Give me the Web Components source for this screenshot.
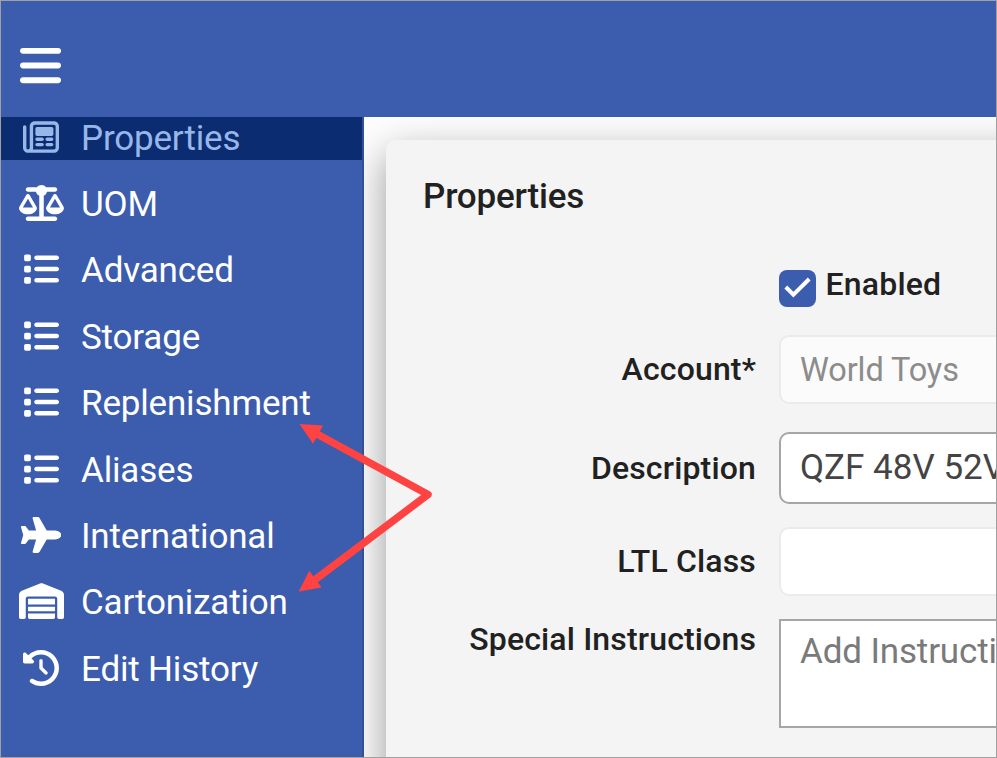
<!DOCTYPE html>
<html lang="en">
<head>
<meta charset="utf-8">
<title>Properties</title>
<style>
  body {
    margin: 0;
    overflow: hidden;
    font-family: Roboto, "Liberation Sans", sans-serif;
  }
</style>
</head>
<body>
<item-app>
  <app-header slot="header"></app-header>
  <side-nav slot="nav">
    <nav-item icon="newspaper" active>Properties</nav-item>
    <nav-item icon="scale">UOM</nav-item>
    <nav-item icon="list">Advanced</nav-item>
    <nav-item icon="list">Storage</nav-item>
    <nav-item icon="list">Replenishment</nav-item>
    <nav-item icon="list">Aliases</nav-item>
    <nav-item icon="plane">International</nav-item>
    <nav-item icon="warehouse">Cartonization</nav-item>
    <nav-item icon="history">Edit History</nav-item>
  </side-nav>
  <form-card heading="Properties">
    <check-field>Enabled</check-field>
    <form-field label="Account*" kind="disabled">World Toys</form-field>
    <form-field label="Description" kind="text">QZF 48V 52V</form-field>
    <form-field label="LTL Class" kind="select"></form-field>
    <form-field label="Special Instructions" kind="area">Add Instructi</form-field>
  </form-card>
  <callout-arrows slot="overlay"></callout-arrows>
</item-app>

<script>
const ICONS = {
  bars: [448, 'M0 96C0 78.3 14.3 64 32 64H416c17.7 0 32 14.3 32 32s-14.3 32-32 32H32C14.3 128 0 113.7 0 96zM0 256c0-17.7 14.3-32 32-32H416c17.7 0 32 14.3 32 32s-14.3 32-32 32H32c-17.7 0-32-14.3-32-32zM448 416c0 17.7-14.3 32-32 32H32c-17.7 0-32-14.3-32-32s14.3-32 32-32H416c17.7 0 32 14.3 32 32z'],
  newspaper: [512, 'M168 80c-13.3 0-24 10.7-24 24V408c0 8.4-1.4 16.5-4.1 24H440c13.3 0 24-10.7 24-24V104c0-13.3-10.7-24-24-24H168zM72 480c-39.8 0-72-32.2-72-72V112C0 98.7 10.7 88 24 88s24 10.7 24 24V408c0 13.3 10.7 24 24 24s24-10.7 24-24V104c0-39.8 32.2-72 72-72H440c39.8 0 72 32.2 72 72V408c0 39.8-32.2 72-72 72H72zM176 136c0-13.3 10.7-24 24-24H408c13.3 0 24 10.7 24 24v80c0 13.3-10.7 24-24 24H200c-13.3 0-24-10.7-24-24V136zm24 128h72c13.3 0 24 10.7 24 24s-10.7 24-24 24H200c-13.3 0-24-10.7-24-24s10.7-24 24-24zm144 0h64c13.3 0 24 10.7 24 24s-10.7 24-24 24H344c-13.3 0-24-10.7-24-24s10.7-24 24-24zM200 340h72c13.3 0 24 10.7 24 24s-10.7 24-24 24H200c-13.3 0-24-10.7-24-24s10.7-24 24-24zm144 0h64c13.3 0 24 10.7 24 24s-10.7 24-24 24H344c-13.3 0-24-10.7-24-24s10.7-24 24-24z'],
  scale: [640, 'M384 32H512c17.7 0 32 14.3 32 32s-14.3 32-32 32H398.4c-5.2 25.8-22.9 47.1-46.4 57.3V448H512c17.7 0 32 14.3 32 32s-14.3 32-32 32H320 128c-17.7 0-32-14.3-32-32s14.3-32 32-32H288V153.3c-23.5-10.3-41.2-31.6-46.4-57.3H128c-17.7 0-32-14.3-32-32s14.3-32 32-32H256c14.6-19.4 37.8-32 64-32s49.4 12.6 64 32zm55.6 288H584.4L512 195.8 439.6 320zM512 416c-62.9 0-115.2-34-126-78.9c-2.6-11 1-22.3 6.7-32.1l95.2-163.2c5-8.6 14.2-13.8 24.1-13.8s19.1 5.3 24.1 13.8l95.2 163.2c5.7 9.8 9.3 21.1 6.7 32.1C627.2 382 574.9 416 512 416zM126.8 195.8L54.4 320H199.3L126.8 195.8zM.9 337.1c-2.6-11 1-22.3 6.7-32.1l95.2-163.2c5-8.6 14.2-13.8 24.1-13.8s19.1 5.3 24.1 13.8l95.2 163.2c5.7 9.8 9.3 21.1 6.7 32.1C242 382 189.7 416 126.8 416S11.7 382 .9 337.1z'],
  list: [512, 'M40 48C26.7 48 16 58.7 16 72v48c0 13.3 10.7 24 24 24H88c13.3 0 24-10.7 24-24V72c0-13.3-10.7-24-24-24H40zM192 64c-17.7 0-32 14.3-32 32s14.3 32 32 32H480c17.7 0 32-14.3 32-32s-14.3-32-32-32H192zm0 160c-17.7 0-32 14.3-32 32s14.3 32 32 32H480c17.7 0 32-14.3 32-32s-14.3-32-32-32H192zm0 160c-17.7 0-32 14.3-32 32s14.3 32 32 32H480c17.7 0 32-14.3 32-32s-14.3-32-32-32H192zM16 232v48c0 13.3 10.7 24 24 24H88c13.3 0 24-10.7 24-24V232c0-13.3-10.7-24-24-24H40c-13.3 0-24 10.7-24 24zM40 368c-13.3 0-24 10.7-24 24v48c0 13.3 10.7 24 24 24H88c13.3 0 24-10.7 24-24V392c0-13.3-10.7-24-24-24H40z'],
  plane: [576, 'M482.3 192c34.2 0 93.7 29 93.7 64c0 36-59.5 64-93.7 64l-116.6 0L265.2 495.9c-5.7 10-16.3 16.1-27.8 16.1l-56.2 0c-10.6 0-18.3-10.2-15.4-20.4l49-171.6L112 320 68.8 377.6c-3 4-7.8 6.4-12.8 6.4l-42 0c-7.8 0-14-6.3-14-14c0-1.3 .2-2.6 .5-3.9L32 256 .5 145.9c-.4-1.3-.5-2.6-.5-3.9c0-7.8 6.3-14 14-14l42 0c5 0 9.8 2.4 12.8 6.4L112 192l102.9 0-49-171.6C162.9 10.2 170.6 0 181.2 0l56.2 0c11.5 0 22.1 6.2 27.8 16.1L365.7 192l116.6 0z'],
  warehouse: [640, 'M0 488V171.3c0-26.2 15.9-49.7 40.2-59.4L308.1 4.8c7.6-3.1 16.1-3.1 23.8 0L599.8 111.9c24.3 9.7 40.2 33.3 40.2 59.4V488c0 13.3-10.7 24-24 24H568c-13.3 0-24-10.7-24-24V224c0-17.7-14.3-32-32-32H128c-17.7 0-32 14.3-32 32V488c0 13.3-10.7 24-24 24H24c-13.3 0-24-10.7-24-24zm488 24l-336 0c-13.3 0-24-10.7-24-24V432H512l0 56c0 13.3-10.7 24-24 24zM128 400V336H512v64H128zm0-96V224H512l0 80H128z'],
  history: [512, 'M75 75L41 41C25.9 25.9 0 36.6 0 57.9V168c0 13.3 10.7 24 24 24H134.1c21.4 0 32.1-25.9 17-41l-30.8-30.8C155 85.5 203 64 256 64c106 0 192 86 192 192s-86 192-192 192c-40.8 0-78.6-12.7-109.7-34.4c-14.5-10.1-34.4-6.6-44.6 7.9s-6.6 34.4 7.9 44.6C151.2 495 201.7 512 256 512c141.4 0 256-114.6 256-256S397.4 0 256 0C185.3 0 121.3 28.7 75 75zm181 53c-13.3 0-24 10.7-24 24V256c0 6.4 2.5 12.5 7 17l72 72c9.4 9.4 24.6 9.4 33.9 0s9.4-24.6 0-33.9l-65-65V152c0-13.3-10.7-24-24-24z']
};

function icon(name, height) {
  const [w, d] = ICONS[name];
  return `<svg width="${w * height / 512}" height="${height}" viewBox="0 0 ${w} 512" fill="currentColor"><path d="${d}"/></svg>`;
}

class ItemApp extends HTMLElement {
  connectedCallback() {
    this.attachShadow({ mode: 'open' });
    this.shadowRoot.innerHTML = `
      <style>
        :host {
          display: grid;
          grid-template: 116px 1fr / 363px 1fr;
          box-sizing: border-box;
          position: relative;
          width: 997px;
          height: 758px;
          border: 1px solid #a0a0a0;
          overflow: hidden;
        }
        .header {
          grid-column: 1 / 3;
        }
        .nav, .header {
          display: grid;
        }
        main {
          background: #fdfdfd;
          padding: 23px 0 0 22px;
          overflow: hidden;
          display: grid;
        }
      </style>
      <div class="header"><slot name="header"></slot></div>
      <div class="nav"><slot name="nav"></slot></div>
      <main><slot></slot></main>
      <slot name="overlay"></slot>
    `;
  }
}

class AppHeader extends HTMLElement {
  connectedCallback() {
    this.attachShadow({ mode: 'open' });
    this.shadowRoot.innerHTML = `
      <style>
        :host {
          display: flex;
          align-items: center;
          padding: 13px 0 0 19px;
          background: #3c5cad;
          color: white;
        }
        svg {
          display: block;
        }
      </style>
      ${icon('bars', 47)}
    `;
  }
}

class SideNav extends HTMLElement {
  connectedCallback() {
    this.attachShadow({ mode: 'open' });
    this.shadowRoot.innerHTML = `
      <style>
        :host {
          display: grid;
          grid-template-rows: 66px 66px 67px 66px 67px 66px 66px 67px 43px;
          align-content: start;
          align-items: start;
          background: #3c5cad;
          border-right: 2px solid #335095;
        }
      </style>
      <slot></slot>
    `;
  }
}

class NavItem extends HTMLElement {
  connectedCallback() {
    this.attachShadow({ mode: 'open' });
    this.shadowRoot.innerHTML = `
      <style>
        :host {
          display: flex;
          align-items: center;
          height: 43px;
          padding-left: 18px;
          gap: 18px;
          color: white;
          font-size: 35px;
          letter-spacing: -0.18px;
          line-height: 43px;
        }
        :host([active]) {
          background: #0c2c72;
          color: #98b7e9;
        }
        .icon {
          display: flex;
          justify-content: center;
          width: 44px;
          margin-top: -3px;
        }
        svg {
          flex: none;
        }
      </style>
      <span class="icon">${icon(this.getAttribute('icon'), 36)}</span>
      <span><slot></slot></span>
    `;
  }
}

class FormCard extends HTMLElement {
  connectedCallback() {
    this.attachShadow({ mode: 'open' });
    this.shadowRoot.innerHTML = `
      <style>
        :host {
          display: block;
          width: 700px;
          height: 700px;
          background: #f4f4f4;
          border-radius: 10px;
          box-shadow: 0 14px 40px rgba(0, 0, 0, 0.4);
        }
        h2 {
          margin: 0;
          padding: 35px 0 0 37px;
          font-size: 35px;
          font-weight: 500;
          letter-spacing: -0.2px;
          line-height: 44px;
          color: #212121;
        }
        .fields {
          display: flex;
          flex-direction: column;
          padding-top: 51px;
        }
      </style>
      <h2>${this.getAttribute('heading')}</h2>
      <div class="fields"><slot></slot></div>
    `;
  }
}

class CheckField extends HTMLElement {
  connectedCallback() {
    this.attachShadow({ mode: 'open' });
    this.shadowRoot.innerHTML = `
      <style>
        :host {
          display: flex;
          gap: 9.5px;
          height: 37px;
          padding-left: 393px;
          margin-bottom: 28px;
          color: #212121;
          font-size: 32px;
          font-weight: 500;
          letter-spacing: 0.2px;
          line-height: 28px;
        }
        .box {
          width: 37px;
          height: 37px;
          background: #3c5cad;
          border-radius: 8px;
        }
        svg {
          display: block;
        }
      </style>
      <span class="box">
        <svg width="37" height="37" viewBox="0 0 37 37" fill="none" stroke="white" stroke-width="4">
          <path d="M6.8 17L14.4 24.6L30.2 9"/>
        </svg>
      </span>
      <span><slot></slot></span>
    `;
  }
}

class FormField extends HTMLElement {
  connectedCallback() {
    this.attachShadow({ mode: 'open' });
    this.shadowRoot.innerHTML = `
      <style>
        :host {
          display: grid;
          grid-template-columns: 370px 1fr;
          gap: 23px;
          margin-bottom: 28px;
          white-space: nowrap;
        }
        label {
          text-align: right;
          color: #212121;
          font-size: 32px;
          font-weight: 500;
          letter-spacing: 0.15px;
          line-height: 68px;
        }
        .control {
          box-sizing: border-box;
          height: 69px;
          padding-left: 19px;
          border: 2px solid #ebebeb;
          border-radius: 10px;
          background: white;
          font-size: 35px;
          line-height: 65px;
        }
        :host([kind="disabled"]) .control {
          background: #fbfbfb;
          color: #8c8c8c;
          font-size: 32.5px;
          letter-spacing: -0.1px;
          line-height: 66px;
        }
        :host([kind="text"]) {
          margin-bottom: 23px;
        }
        :host([kind="text"]) label {
          line-height: 72px;
        }
        :host([kind="text"]) .control {
          height: 72px;
          border-color: #a6a6a6;
          color: #444;
          line-height: 67px;
        }
        :host([kind="select"]) {
          margin-bottom: 23px;
        }
        :host([kind="area"]) label {
          line-height: 40px;
        }
        :host([kind="area"]) .control {
          height: 109px;
          border-color: #a6a6a6;
          border-radius: 0;
          color: #7a7a7a;
          letter-spacing: -0.15px;
          line-height: 61px;
        }
      </style>
      <label>${this.getAttribute('label')}</label>
      <div class="control"><slot></slot></div>
    `;
  }
}

class CalloutArrows extends HTMLElement {
  connectedCallback() {
    this.attachShadow({ mode: 'open' });
    this.shadowRoot.innerHTML = `
      <style>
        :host {
          position: absolute;
          left: 289px;
          top: 409px;
          pointer-events: none;
        }
        svg {
          display: block;
        }
      </style>
      <svg width="150" height="195" viewBox="290 410 150 195">
        <path d="M316 433.5L428 494.5L314 580.5" fill="none" stroke="#ff4343" stroke-width="7.5" stroke-linejoin="round"/>
        <path d="M299.5 424L323 425.5L313 443.7zM298.7 591.5L309.3 570.7L321.5 587.5z" fill="#ff4343"/>
      </svg>
    `;
  }
}

customElements.define('item-app', ItemApp);
customElements.define('app-header', AppHeader);
customElements.define('side-nav', SideNav);
customElements.define('nav-item', NavItem);
customElements.define('form-card', FormCard);
customElements.define('check-field', CheckField);
customElements.define('form-field', FormField);
customElements.define('callout-arrows', CalloutArrows);
</script>
</body>
</html>
